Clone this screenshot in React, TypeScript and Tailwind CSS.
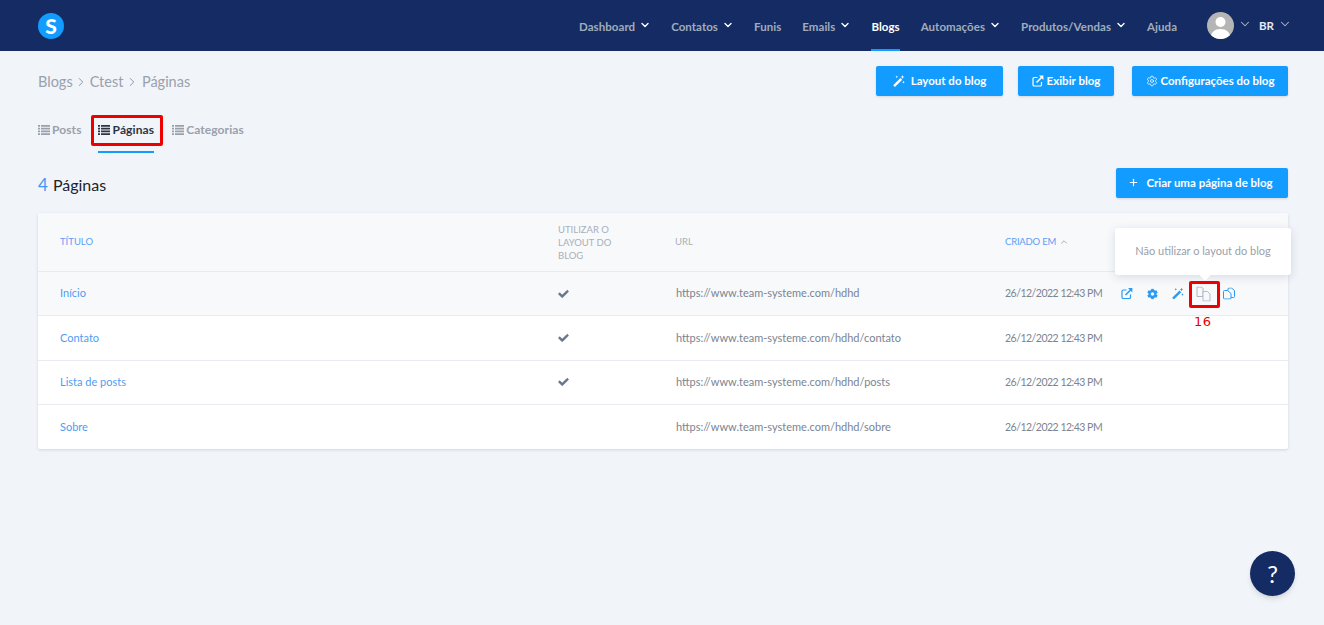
import { ChevronDown, ChevronRight, ChevronUp, Plus, Settings } from "lucide-react"
import { FaCheck, FaCog } from "react-icons/fa"

const menu = [
  { label: "Dashboard", caret: true },
  { label: "Contatos", caret: true },
  { label: "Funis" },
  { label: "Emails", caret: true },
  { label: "Blogs", active: true },
  { label: "Automações", caret: true },
  { label: "Produtos/Vendas", caret: true },
  { label: "Ajuda" },
]

const pages = [
  { title: "Início", layout: true, url: "https://www.team-systeme.com/hdhd" },
  { title: "Contato", layout: true, url: "https://www.team-systeme.com/hdhd/contato" },
  { title: "Lista de posts", layout: true, url: "https://www.team-systeme.com/hdhd/posts" },
  { title: "Sobre", layout: false, url: "https://www.team-systeme.com/hdhd/sobre" },
]

function ListIcon() {
  return (
    <svg viewBox="0 0 12 10" className="w-[12px] h-[10px]" fill="currentColor">
      <path d="M0 0h2v1.700H0zM3 0h9v1.700H3zM0 2.700h2v1.700H0zM3 2.700h9v1.700H3zM0 5.500h2v1.700H0zM3 5.500h9v1.700H3zM0 8.200h2V10H0zM3 8.200h9V10H3z" />
    </svg>
  )
}

function ExternalIcon({ className }: { className: string }) {
  return (
    <svg viewBox="0 0 12 12" className={className} fill="none" stroke="currentColor">
      <path d="M9.500 7v2.700a1.300 1.300 0 0 1-1.300 1.300H2.300A1.300 1.300 0 0 1 1 9.700V3.800a1.300 1.300 0 0 1 1.300-1.300H5.500" strokeWidth="1.200" />
      <path d="M4.500 7.500 10 2" strokeWidth="1.600" />
      <path d="M7 .6h4.400V5z" fill="currentColor" stroke="none" />
    </svg>
  )
}

function WandIcon({ className }: { className: string }) {
  return (
    <svg viewBox="0 0 12 12" className={className} fill="currentColor">
      <path d="M.2 10.300 7.500 3l1.700 1.700-7.300 7.300z" />
      <path d="M9.500.1l.5 1.400 1.400.5-1.400.5-.5 1.400-.5-1.400-1.400-.5 1.400-.5zM3.800.4l.4 1 1 .4-1 .4-.4 1-.4-1-1-.4 1-.4zM10.400 5.800l.4 1 1 .4-1 .4-.4 1-.4-1-1-.4 1-.4z" />
    </svg>
  )
}

function PagesIcon({ className }: { className: string }) {
  return (
    <svg viewBox="0 0 15 15" className={className} fill="none" strokeWidth="0.9">
      <path d="M1 .5h4.500L7 2v8H1z" stroke="#a9afb8" />
      <path d="M7 5h4.500L14 7.500v7H7z" stroke="#a8b5cc" fill="#f8f9fb" />
    </svg>
  )
}

function CopyIcon({ className }: { className: string }) {
  return (
    <svg viewBox="0 0 12 12" className={className} fill="none" stroke="currentColor" strokeWidth="1">
      <path d="M5 3V1.500A1 1 0 0 1 6 .5h2.500L11.500 3v6a1 1 0 0 1-1 1H8" />
      <path d="M1.500 3H4.500L8 6v4.500a1 1 0 0 1-1 1H1.500a1 1 0 0 1-1-1V4a1 1 0 0 1 1-1z" />
    </svg>
  )
}

function TopButton({ children, className }: { children: React.ReactNode; className: string }) {
  return (
    <button className={`h-[30px] pb-[1px] bg-[#129cff] rounded-[2px] text-white text-[11.5px] font-bold flex items-center justify-center shadow-sm ${className}`}>
      {children}
    </button>
  )
}

export default function App() {
  return (
    <div className="relative h-[625px] overflow-hidden bg-[#f1f4f9] font-['Lato',sans-serif] text-[#6b7684]">
      {/* Navbar */}
      <header className="h-[51px] bg-[#142c63] flex items-center pl-[38px] pr-[32px]">
        <div className="w-[26px] h-[26px] rounded-full bg-[#129cff] flex items-center justify-center text-white text-[21px] font-black leading-none">
          S
        </div>
        <nav className="ml-auto flex items-center h-full gap-[21px] text-[11.5px] tracking-[0.05px] font-bold text-[#a0acbd]">
          {menu.map((item) => (
            <div
              key={item.label}
              className={`relative h-full flex items-center gap-[4px] pt-[2px] ${item.active ? "text-white" : ""}`}
            >
              {item.label}
              {item.caret && <ChevronDown className="w-[12px] h-[12px] text-white -mt-[3px] -mr-[1px]" strokeWidth={2.8} />}
              {item.active && <div className="absolute left-0 right-0 bottom-0 h-[2px] bg-[#129cff]" />}
            </div>
          ))}
        </nav>
        <div className="ml-[30px] flex items-center">
          <div className="w-[27px] h-[27px] rounded-full bg-[#b5b5b5] overflow-hidden">
            <svg viewBox="0 0 27 27" className="w-full h-full" fill="#fff">
              <circle cx="13.500" cy="10" r="5" />
              <path d="M3.500 27c0-7 4.500-10 10-10s10 3 10 10z" />
            </svg>
          </div>
          <ChevronDown className="ml-[4px] w-[14px] h-[14px] text-[#aeb8c8] -mt-[3px]" strokeWidth={1.8} />
          <span className="ml-[7px] text-[11.5px] font-bold text-[#e6eaf2]">BR</span>
          <ChevronDown className="ml-[4px] w-[14px] h-[14px] text-[#aeb8c8] -mt-[3px]" strokeWidth={1.8} />
        </div>
      </header>

      <main className="pl-[38px] pr-[36px]">
        {/* Breadcrumb + actions */}
        <div className="pt-[15px] flex items-center justify-between">
          <div className="pt-[1px] flex items-center text-[14.5px] text-[#9aa1ab]">
            Blogs
            <ChevronRight className="mx-[1.5px] w-[14px] h-[14px] text-[#7f8894]" strokeWidth={1.5} />
            Ctest
            <ChevronRight className="ml-[2px] mr-[2.5px] w-[14px] h-[14px] text-[#7f8894]" strokeWidth={1.5} />
            Páginas
          </div>
          <div className="flex items-center">
            <TopButton className="w-[127px] gap-[6px]">
              <WandIcon className="w-[12px] h-[12px]" />
              Layout do blog
            </TopButton>
            <TopButton className="w-[96px] ml-[15px] gap-[3px]">
              <ExternalIcon className="w-[12px] h-[12px]" />
              Exibir blog
            </TopButton>
            <TopButton className="w-[156px] ml-[18px] gap-[3px]">
              <Settings className="w-[12px] h-[12px]" strokeWidth={1.5} />
              Configurações do blog
            </TopButton>
          </div>
        </div>

        {/* Tabs */}
        <div className="mt-[20px] h-[37px] flex text-[12px] tracking-[0.1px] font-bold text-[#9aa1ab]">
          <div className="flex items-center gap-[2px] h-[27px]">
            <ListIcon />
            Posts
          </div>
          <div className="relative ml-[16px] flex items-center gap-[3px] h-[27px] text-[#2c3444]">
            <ListIcon />
            Páginas
            <div className="absolute left-0 right-0 top-[35px] h-[2px] bg-[#129cff]" />
            <div className="absolute -left-[7px] -right-[9px] -top-[1px] h-[31px] border-[3px] border-[#ec0000] rounded-[2px]" />
          </div>
          <div className="ml-[18px] flex items-center gap-[2px] h-[27px]">
            <ListIcon />
            Categorias
          </div>
        </div>

        {/* Title row */}
        <div className="mt-[15px] flex items-center justify-between">
          <div className="pt-[3px] text-[16px] text-[#1c2430]">
            <span className="text-[#3f97f5] text-[17px] mr-[5px]">4</span>
            Páginas
          </div>
          <button className="w-[172px] h-[30px] pb-[1px] pr-[3px] bg-[#129cff] rounded-[2px] text-white text-[11.5px] font-bold flex items-center justify-center gap-[7px] shadow-sm">
            <Plus className="w-[11px] h-[11px]" strokeWidth={2.5} />
            Criar uma página de blog
          </button>
        </div>

        {/* Table */}
        <div className="mt-[15px] w-[1250px] bg-white rounded-[2px] shadow-[0_1px_3px_rgba(20,44,99,0.15)] text-[11px]">
          <div className="h-[59px] bg-[#f8f9fb] border-b border-[#e8ebf0] grid grid-cols-[498px_117px_330px_1fr] items-center pl-[22px] text-[9.5px] text-[#a9afb8]">
            <div className="text-[#5f9df7]">TÍTULO</div>
            <div className="w-[62px] leading-[13px]">UTILIZAR O LAYOUT DO BLOG</div>
            <div>URL</div>
            <div className="text-[#5f9df7] flex items-center gap-[3px] tracking-[-0.2px]">
              CRIADO EM
              <ChevronUp className="w-[10px] h-[10px] text-[#9aa1ab]" strokeWidth={2} />
            </div>
          </div>
          {pages.map((page, i) => (
            <div
              key={page.title}
              className={`h-[44.3px] grid grid-cols-[498px_117px_330px_1fr] items-center pl-[22px] ${i === 0 ? "bg-[#f8f9fb]" : ""} ${i < 3 ? "border-b border-[#e8ebf0]" : ""}`}
            >
              <div className="text-[#4f9df2]">{page.title}</div>
              <div>{page.layout && <FaCheck className="w-[11px] h-[10px] text-[#667488] stroke-current stroke-[30]" />}</div>
              <div className="pl-[1px] text-[#7b8490]">{page.url}</div>
              <div className="relative text-[#7b8490]">
                <span className="text-[10.5px] tracking-[-0.5px]">26/12/2022 12:43 PM</span>
                {i === 0 && (
                  <div className="absolute left-[116px] top-1/2 -translate-y-1/2 flex items-center text-[#2b9af3]">
                    <ExternalIcon className="w-[12px] h-[12px]" />
                    <FaCog className="ml-[14px] w-[11px] h-[11px]" />
                    <WandIcon className="ml-[14px] w-[12px] h-[12px]" />
                    <PagesIcon className="ml-[12px] w-[15px] h-[15px]" />
                    <CopyIcon className="ml-[12px] w-[12px] h-[12px]" />
                  </div>
                )}
              </div>
            </div>
          ))}
        </div>
      </main>

      {/* Tooltip */}
      <div className="absolute left-[1115px] top-[228px] w-[176px] h-[47px] bg-white rounded-[3px] shadow-[0_2px_10px_rgba(20,44,99,0.15)] flex items-center justify-center text-[11px] text-[#9aa1ab]">
        Não utilizar o layout do blog
        <div className="absolute left-[86px] -bottom-[4px] w-[8px] h-[8px] bg-white rotate-45" />
      </div>

      {/* Annotation */}
      <div className="absolute left-[1189px] top-[281px] w-[31px] h-[27px] border-[3px] border-[#ec0000] rounded-[2px]" />
      <div className="absolute left-[1194px] top-[314px] font-['DejaVu_Sans',sans-serif] text-[13px] tracking-[0.5px] leading-[16px] text-[#ec0000]">16</div>

      {/* Help */}
      <div className="absolute left-[1250px] top-[551px] w-[45px] h-[45px] rounded-full bg-[#142c63] shadow-md flex items-center justify-center text-white text-[24px]">
        ?
      </div>
    </div>
  )
}
